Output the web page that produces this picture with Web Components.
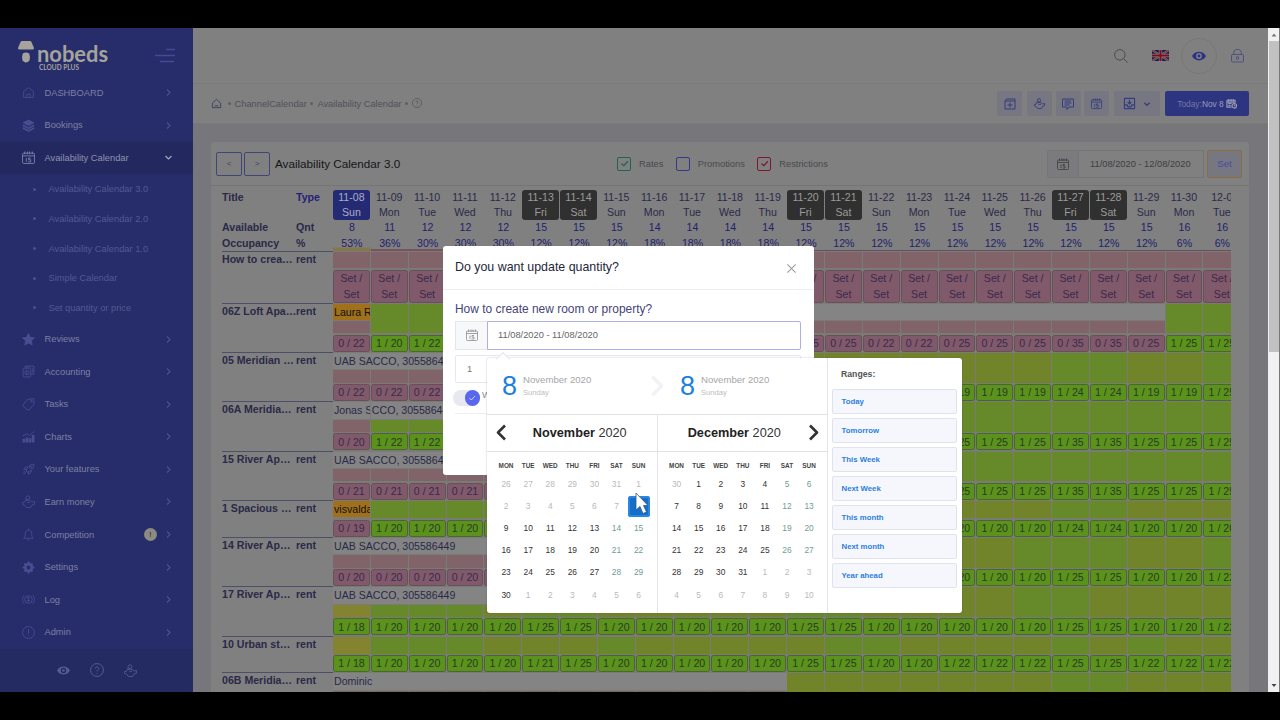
<!DOCTYPE html>
<html lang="en">
<head>
<meta charset="utf-8">
<title>Availability Calendar 3.0</title>
<style>
  body {
    margin: 0;
    background: #000;
    font-family: "Liberation Sans", Arial, sans-serif;
  }
</style>
</head>
<body>
<nobeds-app></nobeds-app>

<script>
const ICONS = {
  home: '<path d="M3 10 12 3l9 7v11H3z"/><path d="M9 21v-6h6v6"/>',
  house: '<path d="M3 11 12 3l9 8v10H3z"/><path d="M8 17h8"/>',
  layers: '<g fill="currentColor"><path d="m12 2 10 5-10 5L2 7z"/><path d="m2 11 10 5 10-5v2l-10 5-10-5z"/><path d="m2 16 10 5 10-5v2l-10 5-10-5z"/></g>',
  calendar: '<rect x="1" y="4" width="22" height="19" rx="2"/><path d="M1 9h22M5 1v5M10 1v5M14 1v5M19 1v5M8 13v7M16 13h-4v3h4v4h-5"/>',
  star: '<path fill="currentColor" d="m12 1 3.300 7 7.700 1-5.600 5.300L18.800 22 12 18.300 5.200 22l1.400-7.700L1 9l7.700-1z"/>',
  coins: '<rect x="2" y="6" width="14" height="16" rx="2"/><path d="M6 6V2h16v15h-6M9 2v4M13 2v4"/><circle cx="9" cy="14" r="4"/><path d="M9 11v6M19 6v8"/>',
  tag: '<path d="m1 14 9-11 12-2v11L12 23z"/><circle cx="17.500" cy="6" r="1.500"/>',
  chart: '<g fill="currentColor" stroke="none"><path d="M1 16h5v7H1zM7 14h4.500v9H7zM12.500 15H17v8h-4.500zM18 9h5v14h-5z"/></g><path d="m1 11 8-4 5 3 9-8"/>',
  rocket: '<path d="M8 15C9 7 14 3 22 2c0 8-5 13-12 15zM8 12H3l4-5 4 1M12 16v5l5-4v-4M3 21l6-6M2 18l3-3"/><circle cx="16" cy="8" r="2"/>',
  piggy: '<path d="M4 12c4-3 12-3 15 1l4-1v5l-4 1-3 5H8l-3-4-4-2v-3h3zM8 10 6 7"/><circle cx="11" cy="5" r="3.500"/><path d="M10 14h5"/>',
  bell: '<path d="M3 19c3-2 3-5 3-9 0-8 12-8 12 0 0 4 0 7 3 9zM10 22h4M12 1v3"/>',
  gear: '<circle cx="12" cy="12" r="6" stroke-width="5"/><path stroke-width="4" d="M12 1v4M12 19v4M1 12h4M19 12h4M4.500 4.500l3 3M16.500 16.500l3 3M19.500 4.500l-3 3M7.500 16.500l-3 3"/>',
  log: '<circle cx="12" cy="12" r="7"/><path d="M12 7v10M9 9h5M9 14h5M4 4C0 9 0 15 4 20M20 4c4 5 4 11 0 16"/>',
  alert: '<circle cx="12" cy="12" r="11"/><path d="M12 6v8M12 17v1.500"/>',
  help: '<circle cx="12" cy="12" r="11"/><path d="M9 9.500C9 5.500 15 6 15 9.500c0 2-3 2.500-3 5M12 17v1.500"/>',
  eye: '<path fill="currentColor" stroke="none" fill-rule="evenodd" d="M0 12C5 2 19 2 24 12 19 22 5 22 0 12zm7 0a5 5 0 0 0 10 0 5 5 0 0 0-10 0z"/><circle cx="12" cy="12" r="2.500" fill="currentColor" stroke="none"/>',
  search: '<circle cx="10" cy="10" r="9"/><path d="m16.500 16.500 7 7"/>',
  lock: '<rect x="1" y="10" width="22" height="14" rx="2"/><path d="M5 10V6c0-7 14-7 14 0v4"/><ellipse cx="12" cy="16.500" rx="2" ry="3"/>',
  note: '<path d="M2 6h20v16H2zM2 6l3-4h17v4M12 9v10M7 14h10"/>',
  chat: '<path d="M1 2h22v16h-9l-4 5v-5H1zM5 6h13M5 10h14M5 14h10"/>',
  inbox: '<path d="M1 1h22v22H1zM1 15h6c0 6 10 6 10 0h6M12 4v9M8 9l4 4 4-4"/>',
  clock: '<path d="M2 5h18v5M2 5v15h10M2 9h18M6 2v5M11 2v5M16 2v5M5 12h7M5 16h5"/><circle cx="18" cy="17" r="5"/><path d="M18 14v3h2"/>',
  right: '<path d="m8 4 8 8-8 8"/>',
  left: '<path d="m16 4-8 8 8 8"/>',
  down: '<path d="m4 8 8 8 8-8"/>',
  check: '<path d="m4 12 6 6L21 6"/>',
  close: '<path d="m3 3 18 18M21 3 3 21"/>'
};

class UiIcon extends HTMLElement {
  connectedCallback() {
    const size = this.getAttribute("size") || 13;
    const stroke = this.getAttribute("stroke") || 1.6;
    this.attachShadow({ mode: "open" }).innerHTML = `
      <style>
        :host { display: inline-flex; flex: none; }
        svg { display: block; overflow: visible; }
      </style>
      <svg width="${size}" height="${size}" viewBox="0 0 24 24" fill="none" stroke="currentColor"
        stroke-width="${stroke}" stroke-linejoin="round">${ICONS[this.getAttribute("name")]}</svg>
    `;
  }
}
customElements.define("ui-icon", UiIcon);

class MenuItem extends HTMLElement {
  connectedCallback() {
    const active = this.hasAttribute("active");
    const badge = this.getAttribute("badge");
    this.attachShadow({ mode: "open" }).innerHTML = `
      <style>
        :host {
          display: flex;
          align-items: center;
          height: 32.6px;
          padding: 0 20px 0 22px;
          font-size: 9.3px;
          color: #7e80a2;
        }
        :host([active]) { background: #23295f; color: #9092b0; }
        .icon { color: #484f91; }
        :host([active]) .icon { color: #8084ad; }
        .label { flex: 1; margin-left: 9.500px; }
        .badge {
          display: flex;
          align-items: center;
          justify-content: center;
          width: 13.500px;
          height: 13.500px;
          margin-right: 7px;
          border-radius: 50%;
          background: #8b8b82;
          color: #222;
          font-size: 8px;
        }
        .arrow { color: #4b5190; }
        :host([active]) .arrow { color: #a5a7c0; }
      </style>
      <ui-icon class="icon" name="${this.getAttribute("icon")}" size="13"></ui-icon>
      <span class="label"><slot></slot></span>
      ${badge ? `<span class="badge">${badge}</span>` : ""}
      <ui-icon class="arrow" name="${active ? "down" : "right"}" size="9" stroke="3"></ui-icon>
    `;
  }
}
customElements.define("menu-item", MenuItem);

class SideMenu extends HTMLElement {
  connectedCallback() {
    this.attachShadow({ mode: "open" }).innerHTML = `
      <style>
        :host {
          display: flex;
          flex-direction: column;
          width: 193px;
          background: #262d6a;
        }
        header {
          display: flex;
          justify-content: space-between;
          height: 48.500px;
          padding: 0 18px;
          box-sizing: border-box;
        }
        menu-item { padding-right: 20px; }
        .sub {
          display: flex;
          align-items: center;
          height: 29.7px;
          padding-left: 33px;
          font-size: 9.3px;
          color: #535992;
        }
        .sub::before {
          content: "";
          width: 3px;
          height: 3px;
          margin-right: 12.500px;
          border-radius: 50%;
          background: #4a5191;
        }
        footer {
          flex: 1;
          display: flex;
          justify-content: center;
          align-items: center;
          gap: 20px;
          background: #242b63;
          color: #555b97;
        }
      </style>
      <header>
        <svg width="92" height="46" viewBox="0 0 92 46" fill="#a5a39c">
          <path d="M4 13h8q1 0 1.500 1l2.300 5.500q.5 2-1.500 2H1.700q-2 0-1.500-2L2.500 14q.5-1 1.500-1z"/>
          <path d="M4.800 25.500q3.200-2 6.400 0 1.500 4 .3 7-1.500 2-3.500 2t-3.500-2q-1.200-3 .3-7z"/>
          <text x="19" y="34" font-family="Lato" font-weight="700" font-size="22.500" textLength="71" lengthAdjust="spacingAndGlyphs">nobeds</text>
          <text x="21" y="42.300" font-family="Lato" font-weight="700" font-size="7" textLength="40" lengthAdjust="spacingAndGlyphs">CLOUD PLUS</text>
        </svg>
        <svg width="20" height="44" viewBox="0 0 20 44" stroke="#434a98" stroke-width="1.500">
          <path d="M11 21.500h9M0 27.500h20M5 33.500h14"/>
        </svg>
      </header>
      <menu-item icon="home">DASHBOARD</menu-item>
      <menu-item icon="layers">Bookings</menu-item>
      <menu-item icon="calendar" active>Availability Calendar</menu-item>
      <div class="sub">Availability Calendar 3.0</div>
      <div class="sub">Availability Calendar 2.0</div>
      <div class="sub">Availability Calendar 1.0</div>
      <div class="sub">Simple Calendar</div>
      <div class="sub">Set quantity or price</div>
      <menu-item icon="star">Reviews</menu-item>
      <menu-item icon="coins">Accounting</menu-item>
      <menu-item icon="tag">Tasks</menu-item>
      <menu-item icon="chart">Charts</menu-item>
      <menu-item icon="rocket">Your features</menu-item>
      <menu-item icon="piggy">Earn money</menu-item>
      <menu-item icon="bell" badge="!">Competition</menu-item>
      <menu-item icon="gear">Settings</menu-item>
      <menu-item icon="log">Log</menu-item>
      <menu-item icon="alert">Admin</menu-item>
      <footer>
        <ui-icon name="eye" size="13"></ui-icon>
        <ui-icon name="help" size="14"></ui-icon>
        <ui-icon name="piggy" size="13"></ui-icon>
      </footer>
    `;
  }
}
customElements.define("side-menu", SideMenu);

class TopBar extends HTMLElement {
  connectedCallback() {
    this.attachShadow({ mode: "open" }).innerHTML = `
      <style>
        :host { display: block; background: #808080; }
        .bar {
          display: flex;
          align-items: center;
          justify-content: flex-end;
          height: 56px;
          padding-right: 24px;
          border-bottom: 1px solid #797979;
          box-sizing: border-box;
          color: #454545;
        }
        .flag { margin: 0 12px 0 24px; }
        .eye {
          display: flex;
          align-items: center;
          justify-content: center;
          width: 36px;
          height: 36px;
          margin-right: 14px;
          border: 1px solid #777;
          border-radius: 50%;
          box-sizing: border-box;
          color: #2b3285;
        }
        .lock { color: #41477f; }
        .crumbs {
          display: flex;
          align-items: center;
          height: 40px;
          padding: 0 19px 0 18px;
          font-size: 9.3px;
          color: #515158;
          border-bottom: 1px solid #7a7a7a;
          box-sizing: border-box;
        }
        .crumbs .home { color: #3c3e62; margin-right: 5.500px; }
        .dot { width: 3px; height: 3px; border-radius: 50%; background: #5e5e68; }
        .crumbs b { font-weight: normal; margin: 0 3.500px 0 4px; }
        .tools { display: flex; margin-left: auto; color: #373d7d; }
        .tool {
          display: flex;
          align-items: center;
          justify-content: center;
          width: 25px;
          height: 25px;
          margin-right: 5px;
          background: #777782;
          border-radius: 2px;
        }
        .tool.near { margin-right: 3.500px; }
        .tool.wide { width: 46px; gap: 8px; }
        .today {
          display: flex;
          align-items: center;
          justify-content: center;
          width: 84px;
          height: 25px;
          border-radius: 2px;
          background: #2d3480;
          color: #9b9db5;
          font-size: 8.4px;
        }
        .today i { font-style: normal; color: #7478a6; }
        .today ui-icon { margin-left: 2px; }
      </style>
      <div class="bar">
        <ui-icon name="search" size="14" stroke="1.5"></ui-icon>
        <svg class="flag" width="17" height="11" viewBox="0 0 17 11">
          <rect width="17" height="11" fill="#161a48"/>
          <path d="m0 0 17 11M17 0 0 11" stroke="#83767f" stroke-width="2.200"/>
          <path d="m0 0 17 11M17 0 0 11" stroke="#721622" stroke-width=".8"/>
          <path d="M8.500 0v11M0 5.500h17" stroke="#8a8188" stroke-width="3.400"/>
          <path d="M8.500 0v11M0 5.500h17" stroke="#7d0e1b" stroke-width="2"/>
        </svg>
        <span class="eye"><ui-icon name="eye" size="14"></ui-icon></span>
        <ui-icon class="lock" name="lock" size="13" stroke="1.5"></ui-icon>
      </div>
      <div class="crumbs">
        <ui-icon class="home" name="house" size="11" stroke="2"></ui-icon>
        <span class="dot"></span><b>ChannelCalendar</b>
        <span class="dot"></span><b>Availability Calendar</b>
        <span class="dot"></span><b><ui-icon name="help" size="10"></ui-icon></b>
        <div class="tools">
          <span class="tool"><ui-icon name="note" size="12" stroke="2"></ui-icon></span>
          <span class="tool near"><ui-icon name="piggy" size="11" stroke="2"></ui-icon></span>
          <span class="tool near"><ui-icon name="chat" size="12" stroke="2"></ui-icon></span>
          <span class="tool"><ui-icon name="calendar" size="11" stroke="1.8"></ui-icon></span>
          <span class="tool wide"><ui-icon name="inbox" size="11" stroke="2.6"></ui-icon><ui-icon name="down" size="8" stroke="4"></ui-icon></span>
          <span class="today"><i>Today:</i>Nov 8<ui-icon name="clock" size="11" stroke="2.4"></ui-icon></span>
        </div>
      </div>
    `;
  }
}
customElements.define("top-bar", TopBar);

class CheckOption extends HTMLElement {
  connectedCallback() {
    this.attachShadow({ mode: "open" }).innerHTML = `
      <style>
        :host { display: flex; align-items: center; font-size: 9.3px; }
        .box {
          display: flex;
          flex: none;
          align-items: center;
          justify-content: center;
          width: 14px;
          height: 14px;
          margin-right: 8px;
          border: 1.500px solid ${this.getAttribute("color")};
          border-radius: 2px;
          box-sizing: border-box;
          color: ${this.getAttribute("color")};
        }
        .label { color: #48484c; }
      </style>
      <span class="box">${this.hasAttribute("checked") ? '<ui-icon name="check" size="9" stroke="3"></ui-icon>' : ""}</span>
      <span class="label"><slot></slot></span>
    `;
  }
}
customElements.define("check-option", CheckOption);

// g: green, o: olive, y: yellow, p: pink. Prices: "-" leaves the tile blank, "n*3" repeats.
const ROOMS = [
  { title: "How to crea…", height: 52, cells: "p".repeat(24), set: true },
  { title: "06Z Loft Apa…", height: 49.2, cells: "pgg" + "p".repeat(19) + "gg",
    bars: [[0, 1, "Laura R", "warn"], [3, 19, ""]],
    prices: "0/22 20 22 -*9 0/25*2 0/22*2 0/25*3 0/35*2 0/25 25*2" },
  { title: "05 Meridian …", height: 49.2, cells: "p".repeat(10) + "o".repeat(9) + "ggoog",
    bars: [[0, 10, "UAB SACCO, 305586449"]],
    prices: "0/22*3 -*13 19*3 24*2 19*2 25" },
  { title: "06A Meridia…", height: 49.3, cells: "p" + "g".repeat(23),
    bars: [[0, 1, "Jonas S"], [1, 9, "CCO, 305586449"]],
    prices: "0/20 22*2 -*13 25*3 35*2 25*3" },
  { title: "15 River Ap…", height: 49.4, cells: "p".repeat(10) + "g".repeat(14),
    bars: [[0, 10, "UAB SACCO, 305586449"]],
    prices: "0/21*4 -*12 25*3 35*2 25*3" },
  { title: "1 Spacious …", height: 37, cells: "p" + "g".repeat(9) + "o".repeat(9) + "ggooo",
    bars: [[0, 1, "visvalda", "warn"]],
    prices: "0/19 20*3 -*12 20*3 24*2 20*3" },
  { title: "14 River Ap…", height: 49.3, cells: "p".repeat(6) + "g".repeat(10) + "oogggoog",
    bars: [[0, 6, "UAB SACCO, 305586449"]],
    prices: "0/20*4 -*12 20*3 25*2 20*2 22" },
  { title: "17 River Ap…", height: 49.3, cells: "yggg" + "oggoooooggo" + "oooggoooo",
    bars: [[0, 5, "UAB SACCO, 305586449"]],
    prices: "18 20*4 25*2 20*5 25*2 20*5 25*2 20*2 22" },
  { title: "10 Urban st…", height: 36.7, cells: "yggg" + "ooogoooooggoo" + "oogogoo",
    prices: "18 20*4 21 25 20*5 25*2 20*2 22*3 25*2 22*3" },
  { title: "06B Meridia…", height: 49, cells: "p".repeat(12) + "o".repeat(7) + "ggooo",
    bars: [[0, 12, "Dominic"]], prices: "-*24" }
];

function expand(list) {
  return list.split(" ").flatMap(part => {
    const [value, times] = part.split("*");
    return Array(Number(times || 1)).fill(value);
  });
}

class RoomRow extends HTMLElement {
  set room(room) {
    const bars = room.bars || [];
    const covered = col => bars.some(([start, span]) => col >= start && col < start + span);
    const prices = room.set ? Array(24).fill("set") : expand(room.prices);

    const cells = [...room.cells].map((kind, i) =>
      `<span class="cell ${kind}" style="grid-column: ${i + 1}; grid-row: ${covered(i) ? 2 : "1 / 3"}"></span>`).join("");

    const tiles = prices.map((price, i) => {
      const full = price === "-" ? "" : price === "set" ? "Set /<br>Set" : price.includes("/") ? price.replace("/", " / ") : `1 / ${price}`;
      const sold = room.cells[i] === "p";
      return `<span class="tile ${sold ? "sold" : ""}" style="grid-column: ${i + 1}">${full}</span>`;
    }).join("");

    const labels = bars.map(([start, span, text, kind]) =>
      `<span class="booking ${kind || ""}" style="grid-column: ${start + 1} / span ${span}">${text}</span>`).join("");

    this.attachShadow({ mode: "open" }).innerHTML = `
      <style>
        :host {
          display: grid;
          grid-template-columns: 74px 37px 1fr;
          height: ${room.height}px;
          font-size: 10.6px;
          color: #2a2948;
        }
        .name {
          font-weight: bold;
          line-height: 15px;
          white-space: nowrap;
          border-top: 1px solid #4c4f68;
          box-sizing: border-box;
        }
        .days {
          display: grid;
          grid-template-columns: repeat(24, 37.85px);
          grid-template-rows: ${room.set ? "0 1fr 33.5px" : "17.3px 1fr 17.3px"};
          overflow: hidden;
          background: #7a7b74;
        }
        .cell { margin: 1px 1px 1.500px 0; }
        .g { background: #668a2a; }
        .o { background: #72842a; }
        .y { background: #84832f; }
        .p { background: #80646a; }
        .tile {
          grid-row: 3;
          display: flex;
          align-items: center;
          justify-content: center;
          margin: 0 1px 0.500px 0;
          padding-top: 1px;
          border: 1px solid #4d6534;
          border-radius: 2.500px;
          box-sizing: border-box;
          line-height: 15.500px;
          text-align: center;
          background: #5b921b;
          color: #293a26;
        }
        .sold { background: #80596a; border-color: #684f5b; color: #3b294c; }
        .booking {
          grid-row: 1;
          margin: 1px 0.500px 0 0;
          overflow: hidden;
          white-space: nowrap;
          line-height: 17px;
          padding-left: 1px;
          background: #848484;
        }
        .warn { background: #a0701a; color: #111; margin-right: 1px; }
      </style>
      <span class="name">${room.title}</span>
      <span class="name">rent</span>
      <div class="days">${cells}${tiles}${labels}</div>
    `;
  }
}
customElements.define("room-row", RoomRow);

class DayHeader extends HTMLElement {
  connectedCallback() {
    const names = ["Sun", "Mon", "Tue", "Wed", "Thu", "Fri", "Sat"];
    const available = [8, 11, 12, 12, 12, 15, 15, 15, 14, 14, 14, 14, 15, 15, 15, 15, 15, 15, 15, 15, 15, 15, 16, 16];
    const rates = { 8: 53, 11: 36, 12: 30, 14: 18, 15: 12, 16: 6 };
    const days = available.map((count, i) => {
      const date = i < 23 ? `11-${String(i + 8).padStart(2, "0")}` : "12-0";
      const kind = i === 0 ? "now" : i % 7 > 4 ? "weekend" : "";
      return `
        <div class="day">
          <div class="date ${kind}">${date}<br>${names[i % 7]}</div>
          <div class="num">${count}</div>
          <div class="num ${i === 0 ? "first" : i > 11 ? "thin" : "line"}">${rates[count]}%</div>
        </div>`;
    }).join("");
    this.attachShadow({ mode: "open" }).innerHTML = `
      <style>
        :host {
          display: grid;
          grid-template-columns: 74px 37px 1fr;
          height: 65px;
          padding-top: 3.600px;
          box-sizing: border-box;
          font-size: 10.6px;
          line-height: 15.400px;
          color: #2a2948;
        }
        .name { font-weight: bold; }
        .name div { height: 30.800px; }
        .type div { color: #25217a; }
        .days { display: grid; grid-template-columns: repeat(24, 37.85px); overflow: hidden; text-align: center; }
        .date { height: 30.800px; margin-right: 1px; border-radius: 3px; }
        .now { background: #242b74; color: #a9abc4; }
        .weekend { background: #303030; color: #9b9b9b; }
        .num { color: #23206e; height: 15.400px; }
        .first { background: linear-gradient(transparent 11px, #84764d 12px); }
        .line { background: linear-gradient(transparent 12.500px, #7a525e 13px); }
        .thin { background: linear-gradient(transparent 14px, #6a4d5e 14.5px); }
      </style>
      <div class="name"><div>Title</div>Available<br>Occupancy</div>
      <div class="name type"><div>Type</div>Qnt<br>%</div>
      <div class="days">${days}</div>
    `;
  }
}
customElements.define("day-header", DayHeader);

class CalendarCard extends HTMLElement {
  connectedCallback() {
    this.attachShadow({ mode: "open" }).innerHTML = `
      <style>
        :host {
          display: block;
          margin: 18px 19px 0 18px;
          background: #808080;
          border-radius: 3px 3px 0 0;
        }
        header {
          display: grid;
          grid-template-columns: 401px 1fr auto;
          align-items: center;
          height: 44px;
          padding: 0 7px 0 5px;
          border-bottom: 1px solid #757575;
          box-sizing: border-box;
        }
        .title { display: flex; align-items: center; gap: 2px; font-size: 11.7px; color: #151518; }
        .step {
          width: 26px;
          height: 24px;
          border: 1px solid #40457a;
          border-radius: 2px;
          box-sizing: border-box;
          line-height: 22px;
          text-align: center;
          font-size: 8px;
          color: #3a3f70;
        }
        .title b { font-weight: normal; margin-left: 3px; }
        .filters { display: flex; gap: 12.5px; }
        .range { display: flex; align-items: center; font-size: 9.3px; color: #3e3e42; }
        .cal {
          display: flex;
          align-items: center;
          justify-content: center;
          width: 32px;
          height: 28px;
          border: 1px solid #757579;
          border-radius: 2px 0 0 2px;
          box-sizing: border-box;
          background: #7b7b7e;
        }
        .dates {
          width: 125px;
          height: 28px;
          margin-right: 3px;
          border: 1px solid #757579;
          border-left: 0;
          box-sizing: border-box;
          line-height: 27px;
          padding-left: 11px;
        }
        .set {
          width: 35px;
          height: 28px;
          border: 1px solid #8a7040;
          border-radius: 2px;
          box-sizing: border-box;
          line-height: 26px;
          text-align: center;
          background: #777782;
          color: #454ca0;
          font-size: 9.8px;
        }
        .table { padding: 0 18px 0 11px; }
      </style>
      <header>
        <div class="title"><span class="step">&lt;</span><span class="step">&gt;</span><b>Availability Calendar 3.0</b></div>
        <div class="filters">
          <check-option color="#1f6352" checked>Rates</check-option>
          <check-option color="#32388a">Promotions</check-option>
          <check-option color="#7b1732" checked>Restrictions</check-option>
        </div>
        <div class="range">
          <span class="cal"><ui-icon name="calendar" size="12"></ui-icon></span>
          <span class="dates">11/08/2020 - 12/08/2020</span>
          <span class="set">Set</span>
        </div>
      </header>
      <div class="table"><day-header></day-header></div>
    `;
    const table = this.shadowRoot.querySelector(".table");
    ROOMS.forEach(room => {
      const row = document.createElement("room-row");
      row.room = room;
      table.append(row);
    });
  }
}
customElements.define("calendar-card", CalendarCard);

class QuantityModal extends HTMLElement {
  connectedCallback() {
    this.attachShadow({ mode: "open" }).innerHTML = `
      <style>
        :host {
          display: block;
          width: 371px;
          height: 228.500px;
          background: #fff;
          border-radius: 3px;
        }
        header {
          display: flex;
          align-items: center;
          justify-content: space-between;
          height: 43.500px;
          padding: 0 17px 0 12px;
          border-bottom: 1px solid #ececf2;
          box-sizing: border-box;
          font-size: 12.4px;
          color: #25263a;
        }
        header ui-icon { color: #999; margin-top: 3px; }
        .body { padding: 12px 13.500px 0 12px; }
        label { display: block; height: 19.500px; font-size: 11.95px; line-height: 15px; color: #45457a; }
        .group { display: flex; height: 28.500px; font-size: 9.3px; color: #666; }
        .cal {
          display: flex;
          align-items: center;
          justify-content: center;
          width: 32px;
          border: 1px solid #e4e5ee;
          border-right: 0;
          box-sizing: border-box;
          background: #f7f8fa;
          color: #8a8a90;
        }
        .field {
          flex: 1;
          padding-left: 10px;
          border: 1px solid #adb0e2;
          border-radius: 0 2px 2px 0;
          box-sizing: border-box;
          line-height: 27px;
        }
        .count {
          height: 28px;
          margin-top: 5px;
          padding-left: 11px;
          border: 1px solid #e6e6ee;
          border-radius: 2px;
          box-sizing: border-box;
          font-size: 9.3px;
          line-height: 26px;
          color: #777;
        }
        .option {
          display: flex;
          align-items: center;
          gap: 2px;
          height: 16px;
          margin: 7.500px 0 0 -2px;
          font-size: 9.3px;
          color: #888;
        }
        .switch {
          display: flex;
          justify-content: flex-end;
          width: 27px;
          height: 16px;
          border-radius: 8px;
          background: #e7e8f0;
        }
        .knob {
          display: flex;
          align-items: center;
          justify-content: center;
          width: 15.500px;
          height: 15.500px;
          border-radius: 50%;
          background: #5867ee;
          color: #dfe2ff;
        }
        .letter { margin-top: -6px; }
        hr { height: 1px; margin: 7px 0 0; border: 0; background: #eeeef4; }
      </style>
      <header>Do you want update quantity?<ui-icon name="close" size="11" stroke="2.2"></ui-icon></header>
      <div class="body">
        <label>How to create new room or property?</label>
        <div class="group">
          <span class="cal"><ui-icon name="calendar" size="12"></ui-icon></span>
          <span class="field">11/08/2020 - 11/08/2020</span>
        </div>
        <div class="count">1</div>
        <div class="option">
          <span class="switch"><span class="knob"><ui-icon name="check" size="8" stroke="2.6"></ui-icon></span></span>
          <span class="letter">W</span>
        </div>
        <hr>
      </div>
    `;
  }
}
customElements.define("quantity-modal", QuantityModal);

class MonthGrid extends HTMLElement {
  connectedCallback() {
    const lead = Number(this.getAttribute("lead"));
    const length = Number(this.getAttribute("length"));
    const before = Number(this.getAttribute("before"));
    const past = Number(this.getAttribute("past") || 0);
    const prev = this.hasAttribute("prev");
    let days = "";
    for (let i = 0; i < 42; i++) {
      const n = i - lead + 1;
      const value = n < 1 ? before + n : n > length ? n - length : n;
      const kind = n < 1 || n > length || n <= past ? "off" : i % 7 > 4 ? "rest" : "";
      if (past && n === past + 1) {
        days += '<span class="picked"></span>';
        continue;
      }
      days += `<span class="${kind}">${value}</span>`;
    }
    this.attachShadow({ mode: "open" }).innerHTML = `
      <style>
        :host { display: block; border-right: 1px solid #e4e4e8; box-sizing: border-box; }
        header {
          display: grid;
          grid-template-columns: ${prev ? "16px 1fr" : "1fr 16px"};
          align-items: center;
          height: 37px;
          padding: 0 6px;
          border-bottom: 1px solid #e2e2e6;
          box-sizing: border-box;
          text-align: center;
          font-size: 12.7px;
          color: #333;
        }
        header ui-icon { justify-content: center; margin-top: -1px; }
        b { color: #222; }
        .week, .days {
          display: grid;
          grid-template-columns: repeat(7, 22.1px);
          justify-items: center;
          align-items: center;
          padding-left: 8px;
        }
        .week { height: 17px; padding-top: 5px; font-size: 6.4px; font-weight: bold; color: #444; }
        .days { grid-auto-rows: 22.1px; margin-top: -1px; font-size: 8.4px; color: #333; }
        .off { color: #b9b9bd; }
        .rest { color: #719c98; }
        .picked { width: 22px; height: 21px; border-radius: 3px; background: #146fcc; box-shadow: inset 0 0 0 2px #2c86e0; margin-left: 1px; }
      </style>
      <header>
        ${prev ? '<ui-icon name="left" size="21" stroke="3"></ui-icon>' : ""}
        <span><b>${this.getAttribute("month")}</b> 2020</span>
        ${prev ? "" : '<ui-icon name="right" size="21" stroke="3"></ui-icon>'}
      </header>
      <div class="week"><span>MON</span><span>TUE</span><span>WED</span><span>THU</span><span>FRI</span><span>SAT</span><span>SUN</span></div>
      <div class="days">${days}</div>
    `;
  }
}
customElements.define("month-grid", MonthGrid);

class RangePicker extends HTMLElement {
  connectedCallback() {
    const ranges = ["Today", "Tomorrow", "This Week", "Next Week", "This month", "Next month", "Year ahead"];
    this.attachShadow({ mode: "open" }).innerHTML = `
      <style>
        :host {
          display: grid;
          grid-template-columns: 341px 1fr;
          width: 475px;
          height: 254.500px;
          border-radius: 3px;
          background: #fff;
          box-shadow: 0 0 2px rgba(60, 60, 90, 0.35);
        }
        .tip {
          position: absolute;
          left: 11px;
          top: -4px;
          width: 9px;
          height: 9px;
          background: #fff;
          border: solid #e4e4ee;
          border-width: 1px 0 0 1px;
          transform: rotate(45deg);
        }
        .summary {
          display: grid;
          grid-template-columns: 156px 22px 1fr;
          align-items: center;
          height: 57px;
          border-bottom: 1px solid #e2e2e6;
          border-right: 1px solid #e4e4e8;
          box-sizing: border-box;
        }
        .pick { display: flex; align-items: center; gap: 6px; padding-left: 15px; }
        .pick strong { font-size: 27px; font-weight: normal; color: #1d7fe0; line-height: 30px; }
        .pick span { font-size: 9.6px; line-height: 13px; color: #a6a6aa; }
        .pick small { display: block; font-size: 7.6px; color: #bcbcc0; }
        .sep { color: #f0f2f8; }
        .months { display: grid; grid-template-columns: 170.500px 170.500px; height: 197.500px; }
        aside { display: flex; flex-direction: column; gap: 4px; padding: 0 5px 0 4px; }
        h4 { margin: 0; height: 26.800px; padding-left: 9px; font-size: 8.7px; line-height: 32px; color: #555; }
        .range {
          height: 25px;
          padding-left: 8.500px;
          border: 1px solid #e0e3ee;
          border-radius: 2px;
          box-sizing: border-box;
          background: #f6f7fc;
          font-size: 7.8px;
          font-weight: bold;
          line-height: 23px;
          color: #2b80dc;
        }
      </style>
      <span class="tip"></span>
      <div>
        <div class="summary">
          <div class="pick"><strong>8</strong><span>November 2020<small>Sunday</small></span></div>
          <ui-icon class="sep" name="right" size="28" stroke="3"></ui-icon>
          <div class="pick"><strong>8</strong><span>November 2020<small>Sunday</small></span></div>
        </div>
        <div class="months">
          <month-grid month="November" lead="6" length="30" before="31" past="7" prev></month-grid>
          <month-grid month="December" lead="1" length="31" before="30"></month-grid>
        </div>
      </div>
      <aside>
        <h4>Ranges:</h4>
        ${ranges.map(name => `<div class="range">${name}</div>`).join("")}
      </aside>
    `;
  }
}
customElements.define("range-picker", RangePicker);

class ScrollRail extends HTMLElement {
  connectedCallback() {
    this.attachShadow({ mode: "open" }).innerHTML = `
      <style>
        :host {
          display: flex;
          flex-direction: column;
          align-items: center;
          width: 12px;
          background: #f1f1f1;
          border-right: 1px solid #777;
          box-sizing: border-box;
        }
        svg { display: block; width: 6px; height: 13px; }
        .thumb { width: 10px; height: 311px; margin-left: 1px; background: #c1c1c1; }
        .gap { flex: 1; }
      </style>
      <svg viewBox="0 0 6 13"><path d="m.5 8.500 2.500-3 2.500 3z" fill="#777"/></svg>
      <span class="thumb"></span>
      <span class="gap"></span>
      <svg viewBox="0 0 6 13"><path d="m.5 5 2.500 3 2.500-3z" fill="#444"/></svg>
    `;
  }
}
customElements.define("scroll-rail", ScrollRail);

class NobedsApp extends HTMLElement {
  connectedCallback() {
    this.attachShadow({ mode: "open" }).innerHTML = `
      <style>
        :host { display: block; width: 1280px; height: 720px; overflow: hidden; }
        .screen {
          display: grid;
          grid-template-columns: 193px 1075px 12px;
          height: 664px;
          margin-top: 28px;
          overflow: hidden;
        }
        .page { background: #77777b; height: 664px; overflow: hidden; }
        quantity-modal { position: absolute; left: 443px; top: 246px; }
        range-picker { position: absolute; left: 487px; top: 358px; }
        .cursor { position: absolute; left: 635px; top: 492px; }
      </style>
      <div class="screen">
        <side-menu></side-menu>
        <div class="page">
          <top-bar></top-bar>
          <calendar-card></calendar-card>
        </div>
        <scroll-rail></scroll-rail>
      </div>
      <quantity-modal></quantity-modal>
      <range-picker></range-picker>
      <svg class="cursor" width="14" height="23" viewBox="0 0 14 23">
        <path d="M1 1v17l4-3.500 3 7 3.500-1.500-3-6.500H13z" fill="#fff" stroke="#3a5878" stroke-width=".8"/>
      </svg>
    `;
  }
}
customElements.define("nobeds-app", NobedsApp);
</script>
</body>
</html>
